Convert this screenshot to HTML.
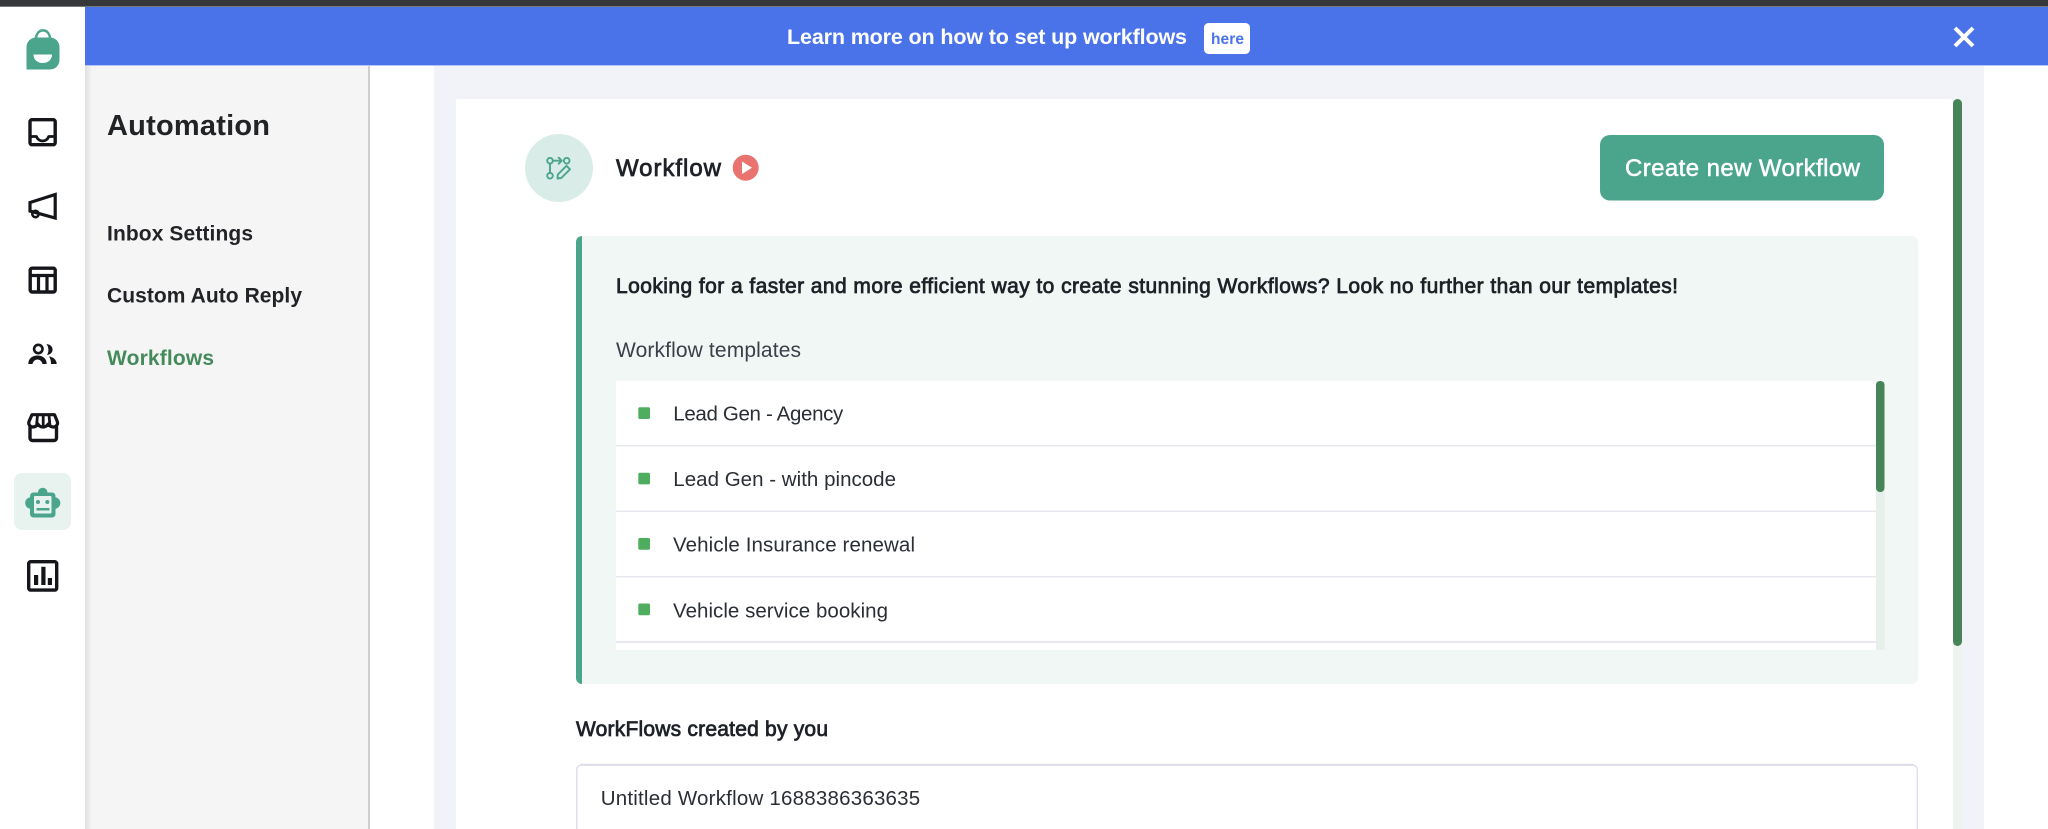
<!DOCTYPE html>
<html lang="en">
<head>
<meta charset="utf-8">
<title>Automation - Workflows</title>
<style>
html,body{margin:0;padding:0;width:2048px;height:829px;overflow:hidden;background:#fff}
svg{display:block;position:absolute;left:0;top:0}
text{font-family:"Liberation Sans",Arial,sans-serif}
.r{fill:#212326;font-weight:700}
.s{fill:#1e2228;stroke:#1e2228;stroke-width:.75px}
.n{fill:#2a2e35}
.ic{fill:none;stroke:#14161a;stroke-linejoin:round;stroke-linecap:round}
</style>
</head>
<body>
<svg width="2048" height="829" viewBox="0 0 2048 829" xmlns="http://www.w3.org/2000/svg">
<defs>
<linearGradient id="sh" x1="0" x2="1" y1="0" y2="0"><stop offset="0" stop-color="#dfdfdf"/><stop offset="1" stop-color="#f5f5f5"/></linearGradient>
</defs>

<!-- page backgrounds -->
<rect x="0" y="0" width="2048" height="829" fill="#fff"/>
<rect x="85" y="66" width="284" height="763" fill="#f5f5f5"/>
<rect x="85" y="66" width="7" height="763" fill="url(#sh)"/>
<rect x="368" y="66" width="2" height="763" fill="#cfcfcf"/>
<rect x="434" y="66" width="1550" height="763" fill="#f1f3f9"/>
<rect x="456" y="99" width="1497" height="730" fill="#fff"/>
<rect x="1953" y="99" width="9" height="730" fill="#eef3f0"/>
<rect x="1953" y="99" width="9" height="547" rx="4.5" fill="#458558"/>

<!-- top bars -->
<rect x="0" y="0" width="2048" height="6" fill="#36373b"/>
<rect x="0" y="6" width="2048" height="1" fill="#77787c"/>
<rect x="85" y="7" width="1963" height="58" fill="#4a73ea"/>
<rect x="85" y="65" width="1963" height="1" fill="#b4c4f4"/>
<text x="787" y="44" font-size="21.500" font-weight="700" fill="#fff" textLength="400">Learn more on how to set up workflows</text>
<rect x="1204" y="23" width="46" height="31" rx="4.5" fill="#fff"/>
<text x="1211" y="44" font-size="15.500" font-weight="700" fill="#4a73ea" textLength="33">here</text>
<path d="M1955 28 L1973 46 M1973 28 L1955 46" stroke="#fff" stroke-width="4" fill="none"/>

<!-- rail icons -->
<path d="M36 39 C36 27.500 50 27.500 50 39" fill="none" stroke="#4ba48c" stroke-width="2.400"/>
<path d="M36 37.500 H50 A9.500 9.500 0 0 1 59.500 47 V60 A9.500 9.500 0 0 1 50 69.500 H26.500 V47 A9.500 9.500 0 0 1 36 37.500 Z" fill="#4ba48c"/>
<path d="M33.500 54.500 H52 C52 60 47.500 63 42.700 63 C38 63 33.500 60 33.500 54.500 Z" fill="#fff"/>

<rect x="30" y="119.700" width="25.200" height="25" rx="2" class="ic" style="stroke-width:3.400"/>
<path d="M30 136.500 H36.500 C37.500 139.500 40 141 42.600 141 C45.200 141 47.700 139.500 48.700 136.500 H55.200" class="ic" style="stroke-width:2.800"/>

<path d="M55.200 194.500 L30 202.500 V211 L55.200 218 Z" class="ic" style="stroke-width:3.200;stroke-linejoin:miter"/>
<circle cx="35.500" cy="214" r="3.200" class="ic" style="stroke-width:2.600"/>

<rect x="30.200" y="268.200" width="25" height="23.800" rx="2" class="ic" style="stroke-width:3.400"/>
<path d="M30 275.500 H55.200 M38.500 275.500 V292 M47 275.500 V292" class="ic" style="stroke-width:3.200;stroke-linecap:butt"/>

<circle cx="38.300" cy="349" r="4.200" class="ic" style="stroke-width:2.600"/>
<path d="M28.300 364 C28.300 358 33 355.500 37.500 355.500 C42 355.500 46.700 358 46.700 364 H42.500 C42 361.500 40 359.500 37.500 359.500 C35 359.500 33 361.500 32.500 364 Z" fill="#14161a"/>
<path d="M46.500 344 C51.500 344.500 53 348 52.500 350.500 C52 353 50 354.500 47 355 C49 352 49 347.500 46.500 344 Z" fill="#14161a"/>
<path d="M49 356.500 C53.500 357 56.700 360 56.700 364 H51 C51 361 50.500 358.500 49 356.500 Z" fill="#14161a"/>

<path d="M30 427 V438 A2.500 2.500 0 0 0 32.500 440.500 H54 A2.500 2.500 0 0 0 56.500 438 V427" class="ic" style="stroke-width:3.400"/>
<path d="M32 414.700 H54.500 L57.300 421.500 C58.300 424.500 56 427 53.500 427 C51.500 427 49.500 426 48.300 424 C47 426 45.200 427 43 427 C41 427 39 426 37.900 424 C36.700 426 35 427 33 427 C30.200 427 28 424.500 29 421.500 Z" class="ic" style="stroke-width:3.200;fill:#fff"/>
<path d="M37.500 415 L36.700 424 M43.200 415 V424.500 M49 415 L49.800 424" class="ic" style="stroke-width:2.800"/>

<rect x="14" y="473" width="57" height="57" rx="8" fill="#e8f3ef"/>
<circle cx="42.700" cy="492.500" r="4.800" fill="#4ba48c"/>
<circle cx="31" cy="503" r="5.800" fill="#4ba48c"/>
<circle cx="54.500" cy="503" r="5.800" fill="#4ba48c"/>
<rect x="30" y="492.500" width="25.500" height="25" rx="3.500" fill="#4ba48c"/>
<rect x="34" y="496" width="17.500" height="17.500" rx="1" fill="#e8f3ef"/>
<circle cx="38" cy="502" r="2" fill="#4ba48c"/>
<circle cx="47.300" cy="502" r="2" fill="#4ba48c"/>
<rect x="36.500" y="508" width="13" height="2.500" fill="#4ba48c"/>

<rect x="28.700" y="561.700" width="28" height="28.400" rx="2" class="ic" style="stroke-width:3.400"/>
<rect x="34" y="575" width="4.200" height="10" fill="#14161a"/>
<rect x="41.300" y="566.800" width="4.200" height="18.200" fill="#14161a"/>
<rect x="47.800" y="578" width="4.200" height="7" fill="#14161a"/>

<!-- side nav -->
<text x="107" y="135" font-size="29" class="r" textLength="163">Automation</text>
<text x="107" y="240.500" font-size="21" class="r" textLength="146">Inbox Settings</text>
<text x="107" y="302.500" font-size="21" class="r" textLength="195">Custom Auto Reply</text>
<text x="107" y="365" font-size="21" font-weight="700" fill="#448a5b" textLength="107">Workflows</text>

<!-- header -->
<circle cx="559" cy="168" r="34" fill="#d9ece7"/>
<g fill="none" stroke="#4ba48c" stroke-width="1.900" stroke-linecap="round" stroke-linejoin="round">
<circle cx="550" cy="160.700" r="2.800"/>
<circle cx="566.700" cy="160.700" r="2.800"/>
<circle cx="550" cy="175.700" r="2.800"/>
<path d="M550 163.500 V172.900 M553 160.700 H561.500 M558.700 157.700 L561.700 160.700 L558.700 163.700"/>
<path d="M557.500 178.500 L557.800 174.500 L566.500 165.800 L570 169.300 L561.300 178 Z"/>
</g>
<text x="616" y="176" font-size="24" class="s" textLength="105">Workflow</text>
<circle cx="745.700" cy="167.700" r="13" fill="#e8736f"/>
<path d="M742 161.500 L752 167.700 L742 174 Z" fill="#fff"/>
<rect x="1600" y="135" width="284" height="65.500" rx="10" fill="#4ba48c"/>
<text x="1625" y="176" font-size="24" fill="#fff" stroke="#fff" stroke-width=".5" textLength="235">Create new Workflow</text>

<!-- templates panel -->
<rect x="576" y="236" width="1342" height="448" rx="6" fill="#f1f7f4"/>
<path d="M582 236 V684 A6 6 0 0 1 576 678 V242 A6 6 0 0 1 582 236 Z" fill="#4ba48c"/>
<text x="616" y="293" font-size="21" class="s" textLength="1062">Looking for a faster and more efficient way to create stunning Workflows? Look no further than our templates!</text>
<text x="616" y="357" font-size="21" fill="#3a3f4a" textLength="185">Workflow templates</text>

<rect x="616" y="381" width="1260" height="269" fill="#fff"/>
<rect x="616" y="445" width="1260" height="1.500" fill="#e8e8f1"/>
<rect x="616" y="510.500" width="1260" height="1.500" fill="#e8e8f1"/>
<rect x="616" y="576" width="1260" height="1.500" fill="#e8e8f1"/>
<rect x="616" y="641" width="1260" height="2" fill="#e8e8f1"/>
<rect x="1876" y="381" width="8.500" height="269" fill="#e6efea"/>
<rect x="1876" y="381" width="8.500" height="111" rx="4" fill="#458558"/>

<rect x="638.300" y="407.300" width="11.700" height="11.700" rx="1.500" fill="#4fae5e"/>
<rect x="638.300" y="472.700" width="11.700" height="11.700" rx="1.500" fill="#4fae5e"/>
<rect x="638.300" y="538" width="11.700" height="11.700" rx="1.500" fill="#4fae5e"/>
<rect x="638.300" y="603.500" width="11.700" height="11.700" rx="1.500" fill="#4fae5e"/>
<text x="673.300" y="420.700" font-size="20.500" class="n" textLength="170">Lead Gen - Agency</text>
<text x="673.300" y="486" font-size="20.500" class="n" textLength="222.700">Lead Gen - with pincode</text>
<text x="673" y="551.700" font-size="20.500" class="n" textLength="242">Vehicle Insurance renewal</text>
<text x="673" y="617.300" font-size="20.500" class="n" textLength="215">Vehicle service booking</text>

<!-- created by you -->
<text x="576" y="736" font-size="21" class="s" textLength="252">WorkFlows created by you</text>
<path d="M576.700 840 V770 A5 5 0 0 1 581.700 765 H1912.300 A5 5 0 0 1 1917.300 770 V840" fill="#fff" stroke="#dfe0ea" stroke-width="1.500"/>
<path d="M581 764.800 H1913" stroke="#dcdde8" stroke-width="2" fill="none"/>
<text x="600.700" y="805" font-size="20.500" class="n" textLength="319.500">Untitled Workflow 1688386363635</text>
</svg>
</body>
</html>
